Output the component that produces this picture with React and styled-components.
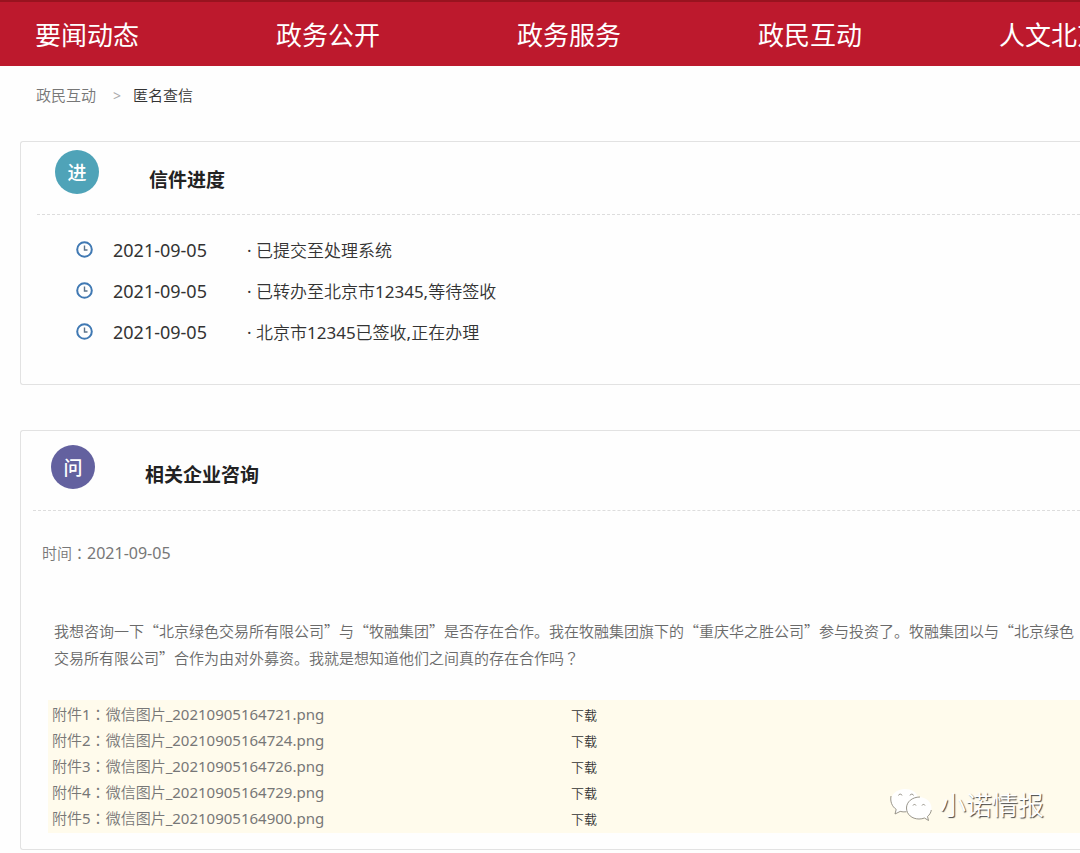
import React from "react";
import styled, { createGlobalStyle } from "styled-components";

const GlobalStyle = createGlobalStyle`
  * {
    box-sizing: border-box;
  }

  body {
    margin: 0;
    overflow-x: hidden;
    background: #fefefe;
    color: #333;
    font-family: "Noto Sans", "Noto Sans CJK SC DemiLight", "Noto Sans CJK SC", sans-serif;
  }

  a {
    color: inherit;
    text-decoration: none;
  }
`;

const Page = styled.div`
  position: relative;
  overflow: hidden;
`;

const Nav = styled.nav`
  display: flex;
  height: 66px;
  padding-left: 35px;
  overflow: hidden;
  background: #bd192d;
  border-top: 2px solid #98131f;
`;

const NavLink = styled.a`
  flex: 0 0 241px;
  color: #fff;
  font-family: "Noto Sans CJK SC", sans-serif;
  font-size: 26px;
  line-height: 64px;
  white-space: nowrap;
`;

const Breadcrumb = styled.nav`
  display: flex;
  gap: 12px;
  padding: 16px 36px 32px;
  font-size: 15px;
  line-height: 27px;
`;

const Crumb = styled.a`
  color: ${(props) => (props.$current ? "#333" : "#777")};
`;

const Separator = styled.span`
  padding-left: 5px;
  color: #aaa;
  font-size: 14px;
`;

const Main = styled.main`
  display: flex;
  flex-direction: column;
  gap: 45px;
  padding: 0 0 3px 20px;
`;

const Card = styled.section`
  padding: 0 0 ${(props) => props.$bottom}px ${(props) => props.$inset}px;
  border: 1px solid #e2e2e2;
  border-right: 0;
  border-radius: 3px 0 0 3px;
  background: #fefefe;
`;

const CardHeader = styled.header`
  display: flex;
  align-items: flex-start;
  gap: 50px;
  height: ${(props) => props.$height}px;
  padding: ${(props) => props.$top}px 0 0 18px;
  border-bottom: 1px dashed #ddd;
`;

const Badge = styled.span`
  width: 44px;
  height: 44px;
  border-radius: 50%;
  background: ${(props) => props.$color};
  color: #fff;
  font-family: "Noto Sans CJK SC", sans-serif;
  font-size: 19px;
  font-weight: 500;
  line-height: 44px;
  text-align: center;
`;

const Title = styled.h2`
  margin: 0;
  padding-top: 14px;
  color: #222;
  font-family: "Noto Sans CJK SC", sans-serif;
  font-size: 19px;
  font-weight: 700;
  line-height: 30px;
`;

const Steps = styled.ul`
  margin: 0;
  padding: 14px 0 0 39px;
  list-style: none;
`;

const Step = styled.li`
  display: flex;
  align-items: center;
  height: 41px;
  font-size: 17px;

  svg {
    flex: none;
    margin-right: 20px;
  }
`;

const StepDate = styled.time`
  width: 134px;
  font-size: 18px;
`;

const Asked = styled.p`
  margin: 0;
  padding: 28px 0 0 9px;
  color: #777;
  font-size: 15px;
  line-height: 28px;

  time {
    font-size: 16px;
  }
`;

// centred full-width punctuation
const WideMark = styled.span`
  font-family: "Noto Sans CJK TC DemiLight", "Noto Sans CJK TC", sans-serif;
`;

const Question = styled.p`
  margin: 0;
  padding: 50px 0 0 21px;
  color: #6a6a6a;
  font-family: "Noto Sans CJK SC DemiLight", "Noto Sans CJK SC", sans-serif;
  font-size: 15px;
  line-height: 27px;
`;

const Attachments = styled.table`
  width: calc(100% - 15px);
  margin: 29px 0 0 15px;
  padding: 1px 0 2px;
  border-spacing: 0;
  background: #fffbec;

  td {
    height: 26px;
    padding: 0 0 0 4px;
    color: #777;
    font-size: 15px;
    line-height: 24px;
  }

  td:first-child {
    width: 519px;
  }
`;

const Download = styled.a`
  color: #333;
  font-size: 13px;
`;

const Watermark = styled.div`
  position: absolute;
  right: 36px;
  bottom: 30px;
  display: flex;
  align-items: center;
  gap: 8px;
  color: #fff;
  font-size: 26px;
  line-height: 36px;
  text-shadow: 1px 1px 1px #444;
`;

const ClockIcon = () => (
  <svg width="17" height="17" viewBox="0 0 17 17" fill="none" aria-hidden="true">
    <circle cx="8.5" cy="8.5" r="7.3" stroke="#4079b3" strokeWidth="2" />
    <path d="M8.5 4.5V9H11.5" stroke="#5c7389" strokeWidth="1.4" />
  </svg>
);

const ChatIcon = () => (
  <svg width="42" height="36" viewBox="0 0 42 36" fill="#fff" aria-hidden="true">
    <g stroke="#8d897e" strokeWidth="0.9" strokeLinejoin="round">
      <path
        d="M15 2C7 2 1 7.200 1 13.500C1 17.200 3 20.300 6.200 22.400L5 27L10.200 24.400C12 24.900 14 25 17 24.800L28 10C26.500 5 21.500 2 15 2Z"
        stroke="none"
      />
      <path d="M1 9C0 14.500 2 19.500 6.200 22.400L5 27L10.200 24.400C12 24.900 14 25 16.500 24.800" fill="none" />
      <path
        d="M29 10C21.500 10 16.500 15 16.500 21C16.500 27.500 22 32 29 32C31 32 32.800 31.700 34.500 31L38.500 33.500L37.500 29.500C40 27.500 41.500 24.500 41.500 21C41.500 15 36 10 29 10Z"
        stroke="none"
      />
      <path
        d="M30 10C22 10 16.500 15 16.500 21C16.500 27.500 22 32 29 32C31 32 32.800 31.700 34.500 31L38.500 33.500L37.500 29.500C39.500 28 41 25.500 41.300 23"
        fill="none"
      />
      <path
        d="M8.500 8.500A1.800 1.800 0 0 1 12 8.500M20 8.500A1.800 1.800 0 0 1 23.500 8.500M23 18.500A1.600 1.600 0 0 1 26 18.500M32 18.500A1.600 1.600 0 0 1 35 18.500"
        fill="none"
      />
    </g>
  </svg>
);

const navItems = ["要闻动态", "政务公开", "政务服务", "政民互动", "人文北京"];

const steps = [
  "已提交至处理系统",
  "已转办至北京市12345,等待签收",
  "北京市12345已签收,正在办理",
];

const files = [
  "微信图片_20210905164721.png",
  "微信图片_20210905164724.png",
  "微信图片_20210905164726.png",
  "微信图片_20210905164729.png",
  "微信图片_20210905164900.png",
];

const App = () => (
  <Page lang="zh-CN">
    <GlobalStyle />
    <Nav>
      {navItems.map((item) => (
        <NavLink href="#" key={item}>
          {item}
        </NavLink>
      ))}
    </Nav>
    <Breadcrumb>
      <Crumb href="#">政民互动</Crumb>
      <Separator>&gt;</Separator>
      <Crumb href="#" $current>
        匿名查信
      </Crumb>
    </Breadcrumb>
    <Main>
      <Card $inset={16} $bottom={32}>
        <CardHeader $height={73} $top={8}>
          <Badge $color="#4fa3b8">进</Badge>
          <Title>信件进度</Title>
        </CardHeader>
        <Steps>
          {steps.map((step) => (
            <Step key={step}>
              <ClockIcon />
              <StepDate>2021-09-05</StepDate>
              <span>· {step}</span>
            </Step>
          ))}
        </Steps>
      </Card>
      <Card $inset={12} $bottom={16}>
        <CardHeader $height={80} $top={14}>
          <Badge $color="#63619f">问</Badge>
          <Title>相关企业咨询</Title>
        </CardHeader>
        <Asked>
          时间<WideMark lang="zh-Hant">：</WideMark>
          <time>2021-09-05</time>
        </Asked>
        <Question>
          我想咨询一下“北京绿色交易所有限公司”与“牧融集团”是否存在合作。我在牧融集团旗下的“重庆华之胜公司”参与投资了。牧融集团以与“北京绿色交易所有限公司”合作为由对外募资。我就是想知道他们之间真的存在合作吗
          <WideMark lang="zh-Hant">？</WideMark>
        </Question>
        <Attachments>
          <tbody>
            {files.map((file, index) => (
              <tr key={file}>
                <td>
                  附件{index + 1}
                  <WideMark lang="zh-Hant">：</WideMark>
                  {file}
                </td>
                <td>
                  <Download href="#">下载</Download>
                </td>
              </tr>
            ))}
          </tbody>
        </Attachments>
      </Card>
    </Main>
    <Watermark>
      <ChatIcon />
      <span>小诺情报</span>
    </Watermark>
  </Page>
);

export default App;
